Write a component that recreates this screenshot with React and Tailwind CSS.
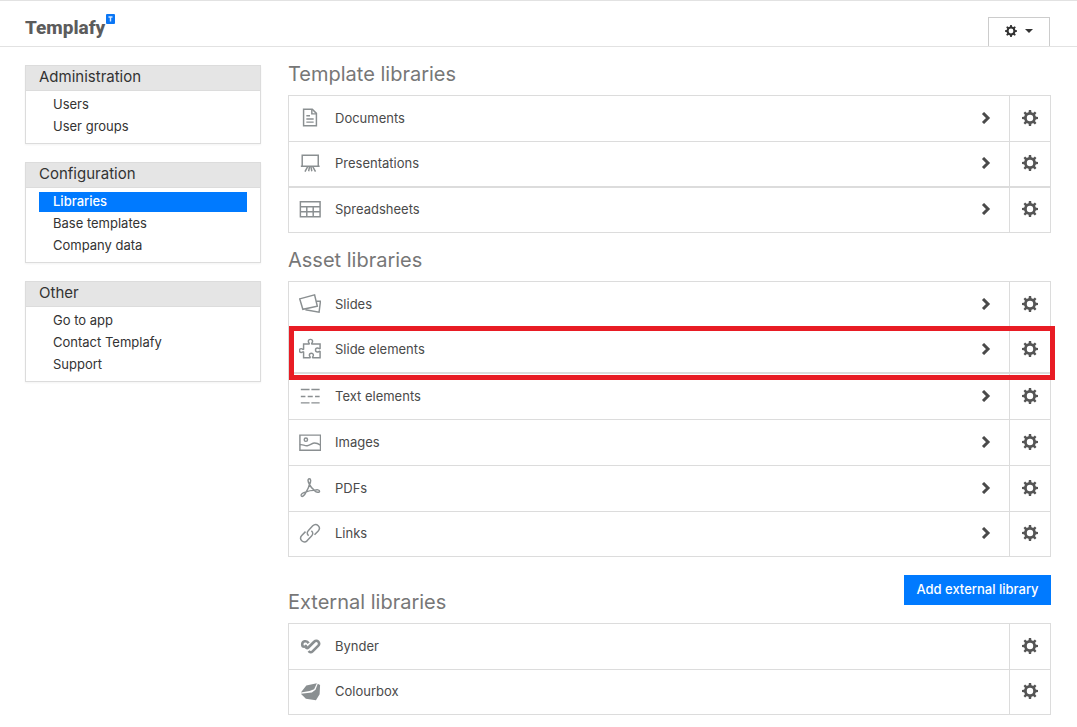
import clsx from "clsx";

const menus = [
  { title: "Administration", items: ["Users", "User groups"] },
  { title: "Configuration", items: ["Libraries", "Base templates", "Company data"] },
  { title: "Other", items: ["Go to app", "Contact Templafy", "Support"] },
];

const templateLibraries = [
  { name: "Documents",     icon: "document" },
  { name: "Presentations", icon: "presentation", thick: true },
  { name: "Spreadsheets",  icon: "spreadsheet" },
];

const assetLibraries = [
  { name: "Slides",         icon: "slides" },
  { name: "Slide elements", icon: "puzzle", thick: true, highlighted: true },
  { name: "Text elements",  icon: "text" },
  { name: "Images",         icon: "image" },
  { name: "PDFs",           icon: "pdf" },
  { name: "Links",          icon: "link" },
];

const externalLibraries = [
  { name: "Bynder",    icon: "bynder",    external: true },
  { name: "Colourbox", icon: "colourbox", external: true },
];

// Line drawings on a 24x24 grid
const drawings = {
  document: (
    <>
      <path d="M5 2.500h9.500l4.500 4.500v13.500H5z" />
      <path d="M14 2.500v5h5M8 9.500h4M8 13h8M8 16.500h8" />
    </>
  ),
  presentation: (
    <path d="M3.500 3.500h17.500v12H3.500zM2 15.500h20.500M9.500 16l-3 5.500M15 16l3 5.500M11.500 16l-1 5M13 16l1 5" />
  ),
  spreadsheet: (
    <path d="M1.500 4h21.500v16.500H1.500zM1.500 9.500h21.500M1.500 15h21.500M8.500 9.500v11M15.500 9.500v11" />
  ),
  slides: (
    <>
      <path d="M.8 6.400L17 2l3 12.500-15.800 3.300z" />
      <path d="M19 9h4.400l-1.500 12L7 18.300" />
    </>
  ),
  puzzle: (
    <path d="M5 6.500h6c.8-.8-.8-1.200-.8-2.700a2.300 2.300 0 0 1 4.600 0c0 1.500-1.600 1.900-.8 2.700h9v5c-.8.900-1.400-.6-2.800-.6a2.200 2.200 0 0 0 0 4.400c1.400 0 2-1.500 2.800-.6v6.800h-8c-.8-.8.700-1.300.7-2.700a2.200 2.200 0 0 0-4.400 0c0 1.400 1.500 1.900.7 2.700H5v-6.300c-.8-.9-1.300.6-2.400.6a2.100 2.100 0 0 1 0-4.200c1.100 0 1.600 1.500 2.400.6z" />
  ),
  text: (
    <path d="M2 5h9.500M13.500 5h9M2 12.500h5M9.500 12.500h5.500M17.500 12.500h5M2 19.500h9.500M13.500 19.500h9" />
  ),
  image: (
    <>
      <path d="M1 4.500h22.500v16.500H1z" />
      <circle cx="7.500" cy="9.500" r="1.800" />
      <path d="M1 15c3-.8 5 1.500 8 1 4-.6 5-3 8-3 2 0 4 .8 6.500 2.500" />
    </>
  ),
  pdf: (
    <path d="M11.200 2c-1.900 0-1.700 3 .2 6 1.900-3 1.700-6-.2-6zM11.400 8c-.6 3-2 5.800-3.600 8.200M11.400 8c1.200 2.500 3 4.700 5.400 6.600M7.800 16.200c3-1.200 6-1.700 9-1.600M7.800 16.200c-3.700.8-6 2.600-5.400 4.300.9 2 3.500-.2 5.400-4.300zM16.800 14.600c2.300 2.400 5.600 2.800 5.600.9 0-1.700-2.900-1.900-5.600-.9z" />
  ),
  link: (
    <path d="M10.500 15c-2.200-2-1.800-4.200-.2-5.800l4.700-5c2-2 4.400-1.700 6-.2 1.500 1.600 1.600 4 0 5.700l-4.100 4.300M13.500 9.500c2.200 2 1.800 4.200.2 5.800L9 20.300c-2 2-4.400 1.700-6 .2-1.500-1.600-1.600-4 0-5.700l4.100-4.300" />
  ),
  bynder: (
    <path
      strokeWidth="2.800"
      strokeLinejoin="round"
      d="M10.500 9C8.500 5.500 3.500 6.500 3.500 10.300c0 1.500 1 2.500 2.200 2.500 1.300 0 2-.8 2.800-1.600M10.500 17.500c1.300 1.800 2.900 1.800 4.300.4l6-6c3-3.200-1-7.600-4.300-4.500l-6.300 6.200c-1 1-2 .9-2.900 0"
    />
  ),
  colourbox: (
    <path
      fill="currentColor"
      stroke="none"
      d="M2 13.500L8 6l11.500-2.500L16.500 10l-5 2zM20.500 4L23 5.500l-.5 10-4 6.500-11-1.500L2 15l12-1.300 4-3.200z"
    />
  ),
};

const LibraryIcon = ({ name }) => (
  <svg
    viewBox="0 0 24 24"
    className="size-[22px] shrink-0 text-[#8a8f91]"
    fill="none"
    stroke="currentColor"
    strokeWidth="1.600"
    aria-hidden="true"
  >
    {drawings[name]}
  </svg>
);

const teeth = [0, 45, 90, 135, 180, 225, 270, 315];

const Gear = ({ className }) => (
  <svg viewBox="0 0 16 16" className={className} aria-hidden="true">
    <circle cx="8" cy="8" r="4.600" fill="none" stroke="currentColor" strokeWidth="2.800" />
    {teeth.map((angle) => (
      <path
        key={angle}
        d="M6.500 3L6.900 0h2.200l.4 3z"
        fill="currentColor"
        transform={`rotate(${angle} 8 8)`}
      />
    ))}
  </svg>
);

const MenuCard = ({ title, items }) => (
  <nav aria-label={title} className="border border-[#dcdcdc] bg-white shadow-xs">
    <h2 className="h-[25px] border-b border-[#dcdcdc] bg-[#e5e5e5] pl-[13px] text-[15px] leading-[22px] text-[#333]">
      {title}
    </h2>
    <ul className="flex flex-col gap-0.5 px-[13px] pt-1 pb-1.5">
      {items.map((item) => (
        <li key={item}>
          <a
            href="#"
            className={clsx(
              "block pb-0.5 pl-3.5 text-[13px] leading-[18px]",
              item === "Libraries" ? "bg-[#007aff] font-medium text-white" : "text-[#333]"
            )}
          >
            {item}
          </a>
        </li>
      ))}
    </ul>
  </nav>
);

const LibraryRow = ({ name, icon, thick, highlighted, external }) => (
  <li
    className={clsx(
      "relative flex h-[46px] border-t border-[#dcdcdc] last:border-b",
      thick && "border-b"
    )}
  >
    <a href="#" className="flex flex-1 items-center gap-3.5 pr-[18px] pb-0.5 pl-2.5">
      <LibraryIcon name={icon} />
      <span className="flex-1 text-[13px] leading-5 text-[#4a4a4a]">{name}</span>
      {!external && (
        <svg viewBox="0 0 10 12" className="h-3 w-2.5 text-[#4a4a4a]" aria-hidden="true">
          <path d="M2 1l5 5-5 5" fill="none" stroke="currentColor" strokeWidth="3" />
        </svg>
      )}
    </a>
    <button
      type="button"
      aria-label={`${name} settings`}
      className="flex w-[41px] items-center justify-center border-l border-[#dcdcdc] pb-0.5 text-[#555]"
    >
      <Gear className="size-4" />
    </button>
    {highlighted && (
      <div className="pointer-events-none absolute -top-0.5 -right-[5px] -bottom-2 left-0 z-10 border-5 border-[#e81c24]" />
    )}
  </li>
);

const LibraryList = ({ rows }) => (
  <ul className="border-x border-[#dcdcdc]">
    {rows.map((row) => (
      <LibraryRow key={row.name} {...row} />
    ))}
  </ul>
);

const Heading = ({ children }) => (
  <h2 className="mb-[7px] text-xl leading-7 text-[#777]">{children}</h2>
);

const App = () => {
  return (
    <div className="min-h-screen bg-white font-['Inter',sans-serif]">
      {/* Top bar */}
      <header className="flex h-[47px] items-end justify-between border-y border-[#e2e2e2] pr-[27px] pl-[25px]">
        <a href="#" className="flex items-start gap-px pb-1.5 text-[#5c5c5c]">
          <span className="font-['Roboto',sans-serif] text-[19px] leading-6 font-extrabold">
            Templafy
          </span>
          <svg viewBox="0 0 9 10" className="-mt-0.5 h-2.5 w-[9px]" aria-hidden="true">
            <rect width="9" height="10" rx="1" fill="#0a76f5" />
            <path d="M2.500 3h4M4.500 3v4.500" stroke="#d5e8ff" strokeWidth="1.400" />
          </svg>
        </a>
        <button
          type="button"
          aria-label="Settings"
          className="flex h-[29px] w-[62px] items-center justify-center gap-2 border border-b-0 border-[#ccc] pb-0.5 text-[#333]"
        >
          <Gear className="size-3" />
          <svg viewBox="0 0 8 4" className="h-1 w-2" aria-hidden="true">
            <path d="M0 0h8L4 4z" fill="currentColor" />
          </svg>
        </button>
      </header>

      <div className="flex gap-[27px] pr-[26px] pb-3 pl-[25px]">
        {/* Sidebar */}
        <aside className="flex w-[236px] shrink-0 flex-col gap-[18px] pt-[18px]">
          {menus.map((menu) => (
            <MenuCard key={menu.title} {...menu} />
          ))}
        </aside>

        {/* Libraries */}
        <main className="min-w-0 flex-1 pt-[13px]">
          <section>
            <Heading>Template libraries</Heading>
            <LibraryList rows={templateLibraries} />
          </section>

          <section className="mt-[13px]">
            <Heading>Asset libraries</Heading>
            <LibraryList rows={assetLibraries} />
          </section>

          <section className="mt-[18px]">
            <div className="flex justify-between">
              <div className="pt-[13px]">
                <Heading>External libraries</Heading>
              </div>
              <button
                type="button"
                className="h-[30px] w-[147px] bg-[#007aff] pb-0.5 text-[13px] leading-5 font-medium text-white"
              >
                Add external library
              </button>
            </div>
            <LibraryList rows={externalLibraries} />
          </section>
        </main>
      </div>
    </div>
  );
};

export default App;
